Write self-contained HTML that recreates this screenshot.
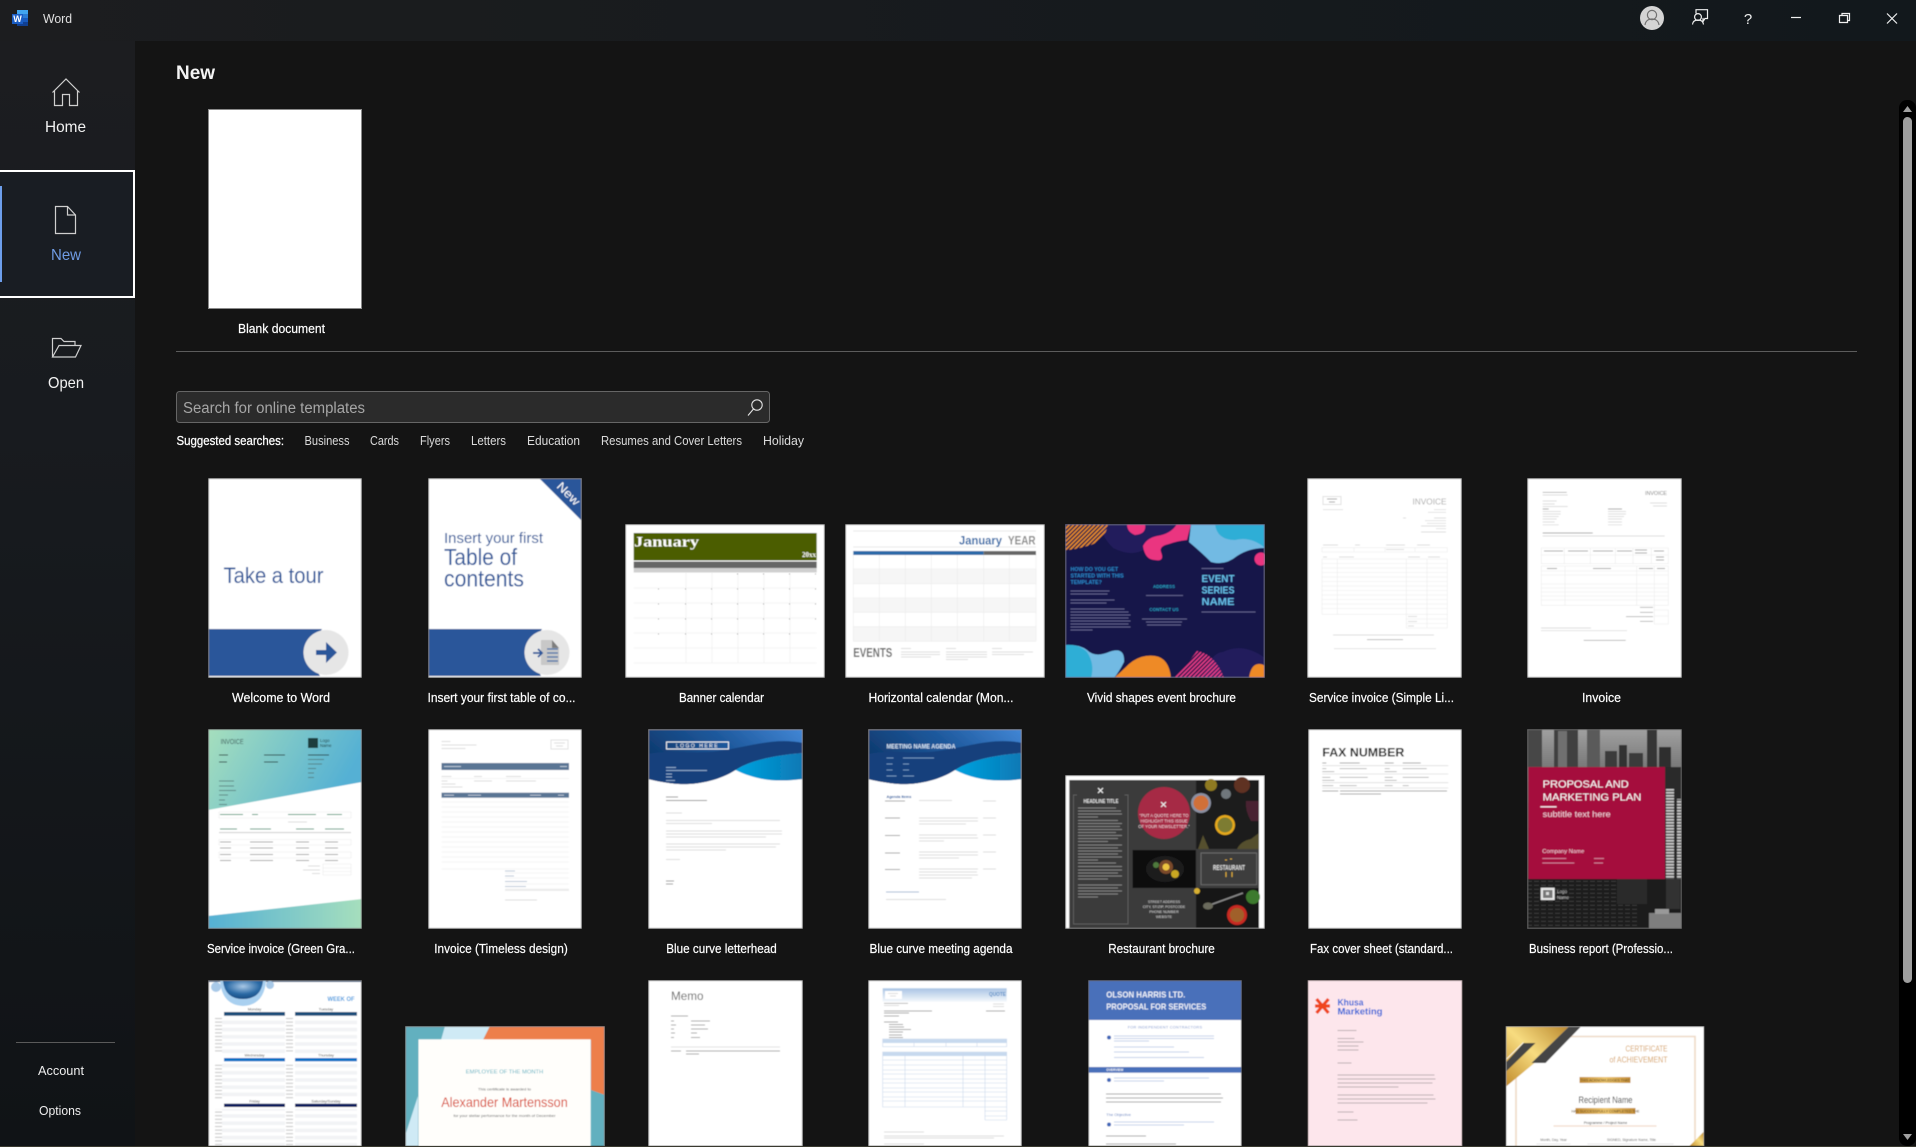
<!DOCTYPE html>
<html lang="en"><head><meta charset="utf-8"><title>Word</title>
<style>
html,body{margin:0;padding:0;width:1916px;height:1147px;overflow:hidden;background:#141414}
svg{display:block}
text{font-family:"Liberation Sans",sans-serif}
.l{fill:#fff;font-size:13px;text-anchor:middle;stroke:#fff;stroke-width:.2px}
.s{fill:#dcdcdc;font-size:13px}
.ic{fill:none;stroke:#cfcfcf;stroke-width:1.2}
.w{fill:none;stroke:#f0f0f0;stroke-width:1.2}
.gl{stroke:#d2d2d2;stroke-width:.7;fill:none}
.gd{stroke:#8c8c8c;stroke-width:.7;fill:none}
.tl{stroke:#ebebeb;stroke-width:.6;fill:none}
</style></head><body>
<svg width="1916" height="1147" viewBox="0 0 1916 1147" xmlns="http://www.w3.org/2000/svg">
<defs>
<filter id="b" x="0" y="0" width="100%" height="100%"><feGaussianBlur stdDeviation=".4"/></filter>
<linearGradient id="tb" x1="0" x2="1"><stop offset="0" stop-color="#1c1d1f"/><stop offset="1" stop-color="#12181c"/></linearGradient>
<linearGradient id="sb" x1="0" y1="0" x2="0" y2="1"><stop offset="0" stop-color="#1c1d20"/><stop offset=".35" stop-color="#181b1f"/><stop offset="1" stop-color="#101316"/></linearGradient>
<linearGradient id="gr1" x1="0" x2="1" y1="0" y2=".3"><stop offset="0" stop-color="#a6dfbd"/><stop offset="1" stop-color="#54b0d4"/></linearGradient>
<linearGradient id="gr2" x1="0" x2="1"><stop offset="0" stop-color="#54b0d4"/><stop offset="1" stop-color="#a6dfbd"/></linearGradient>
<linearGradient id="bw" x1="0" x2="1" y1=".4" y2="0"><stop offset="0" stop-color="#0f3b70"/><stop offset=".5" stop-color="#1f5a9e"/><stop offset="1" stop-color="#4287d6"/></linearGradient>
<linearGradient id="bw2" x1="0" x2="1"><stop offset="0" stop-color="#00a3e0"/><stop offset="1" stop-color="#0a78b4"/></linearGradient>
<linearGradient id="city" x1="0" y1="0" x2="0" y2="1"><stop offset="0" stop-color="#a0a0a0"/><stop offset=".2" stop-color="#777"/><stop offset=".75" stop-color="#222"/><stop offset="1" stop-color="#1e1e1e"/></linearGradient>
<linearGradient id="gold" x1="0" y1="1" x2="1" y2="0"><stop offset="0" stop-color="#c08a2a"/><stop offset=".5" stop-color="#f7dc80"/><stop offset="1" stop-color="#b9862c"/></linearGradient>
<linearGradient id="goldb" x1="0" x2="1"><stop offset="0" stop-color="#c58f38"/><stop offset=".5" stop-color="#eec770"/><stop offset="1" stop-color="#c58f38"/></linearGradient>
<linearGradient id="qb" x1="0" y1="0" x2="0" y2="1"><stop offset="0" stop-color="#a9c4e4"/><stop offset="1" stop-color="#f4f8fc"/></linearGradient>
<radialGradient id="ball" cx=".5" cy=".3" r=".7"><stop offset="0" stop-color="#a9c8e6"/><stop offset=".6" stop-color="#2b6aa5"/><stop offset="1" stop-color="#174a80"/></radialGradient>
<pattern id="hatchO" width="3" height="3" patternUnits="userSpaceOnUse" patternTransform="rotate(-45)"><rect width="3" height="1.5" fill="#ee8f28"/></pattern>
<pattern id="hatchP" width="3" height="3" patternUnits="userSpaceOnUse" patternTransform="rotate(-45)"><rect width="3" height="1.5" fill="#ea3d86"/></pattern>
<pattern id="calr" width="154" height="7.2" patternUnits="userSpaceOnUse" y="37"><rect x="14" y="3.6" width="63" height="3.6" fill="#f2f3f5"/><rect x="87" y="3.6" width="62" height="3.6" fill="#f2f3f5"/><rect x="7" y="1" width="7" height="1" fill="#c4c4c4"/><rect x="78" y="1" width="7" height="1" fill="#c4c4c4"/><rect x="7" y="4.6" width="7" height="1" fill="#c4c4c4"/><rect x="78" y="4.6" width="7" height="1" fill="#c4c4c4"/></pattern>
<pattern id="win" width="16" height="3" patternUnits="userSpaceOnUse"><rect width="16" height="1.5" fill="#c9c9c9"/><rect y="1.500" width="16" height="1.5" fill="#555"/></pattern>
<pattern id="win2" width="7" height="4" patternUnits="userSpaceOnUse"><rect width="5" height=".8" fill="#404040"/></pattern>
<g id="wave">
<path d="M87 41C100 32 125 26 154 24V50C125 54 105 50 87 41Z" fill="url(#bw2)"/>
<path d="M0 0H154V24C125 26 100 32 87 41C70 52 48 56 30 55C18 54 8 52 0 50Z" fill="url(#bw)"/>
<path d="M154 14C125 8 100 18 70 22C45 26 20 20 0 25V50C8 52 18 54 30 55C48 56 70 52 87 41C100 32 125 26 154 24Z" fill="#12417c"/>
</g>
</defs>

<!-- window -->
<rect width="1916" height="1147" fill="#141414"/>
<rect width="1916" height="41" fill="url(#tb)"/>
<rect y="41" width="135" height="1106" fill="url(#sb)"/>

<!-- title bar -->
<rect x="17" y="10" width="11" height="16" rx="1" fill="#2b7cd3"/>
<rect x="17" y="10" width="11" height="4" fill="#41a5ee"/>
<rect x="17" y="18" width="11" height="4" fill="#185abd"/>
<rect x="17" y="22" width="11" height="4" fill="#103f91"/>
<rect x="12" y="14" width="11" height="10" fill="#1a5dc4"/>
<text x="17.5" y="22" font-size="9" font-weight="700" fill="#fff" text-anchor="middle">W</text>
<text x="43" y="23" font-size="13" fill="#e0e0e0" textLength="29" lengthAdjust="spacingAndGlyphs">Word</text>

<circle cx="1652" cy="18" r="12" fill="#d4d4d4"/>
<circle cx="1652" cy="15" r="4.6" fill="none" stroke="#707070" stroke-width="1.2"/>
<path d="M1645 25c.5-4.2 3.5-6 7-6s6.500 1.800 7 6" fill="none" stroke="#707070" stroke-width="1.2"/>
<path class="w" d="M1696 13.5V9.7H1707.5V18.5H1705L1703 21.5V18.500H1702.5"/>
<circle class="w" cx="1698" cy="17" r="3.4"/>
<path class="w" d="M1692.5 24.5c.3-3.5 2.500-4.5 5.500-4.5s5.200 1 5.500 4.5"/>
<text x="1748" y="24" font-size="15" fill="#eee" text-anchor="middle">?</text>
<path d="M1791 17.5H1801" stroke="#f0f0f0" stroke-width="1.2"/>
<path class="w" d="M1839.5 15.5H1847.5V22.5H1839.5Z M1842 15.5V13.5H1849.5V20.5H1847.5"/>
<path class="w" d="M1887 13.5L1897 23.5M1897 13.5L1887 23.5"/>

<!-- sidebar -->
<path class="ic" d="M52.5 92.5L66 79L79.5 92.5M54.5 90.5V105.5H62.5V94.5H69.5V105.5H77.5V90.5"/>
<text x="65.5" y="132" font-size="16" fill="#f2f2f2" text-anchor="middle" textLength="41" lengthAdjust="spacingAndGlyphs">Home</text>
<rect x="-2" y="171" width="136" height="126" fill="#191d23" stroke="#fff" stroke-width="2"/>
<rect x="0" y="186" width="2" height="96" fill="#6d9eeb"/>
<path class="ic" d="M55.5 206.5H67.5L75.5 215V233.5H55.5ZM67.5 206.5V215H75.5"/>
<text x="66" y="260" font-size="16" fill="#6f9be4" text-anchor="middle" textLength="30" lengthAdjust="spacingAndGlyphs">New</text>
<path class="ic" d="M52.5 357V338.5H61L64 341.5H75V345.5M52.5 357L59 345.5H81L75.5 357Z"/>
<text x="66" y="388" font-size="16" fill="#f2f2f2" text-anchor="middle" textLength="36" lengthAdjust="spacingAndGlyphs">Open</text>
<path d="M16 1042.5H115" stroke="#5a5a5a"/>
<text x="61" y="1075" font-size="13" fill="#eee" text-anchor="middle" textLength="46" lengthAdjust="spacingAndGlyphs">Account</text>
<text x="60" y="1115" font-size="13" fill="#eee" text-anchor="middle" textLength="42" lengthAdjust="spacingAndGlyphs">Options</text>

<!-- main -->
<text x="176" y="79" font-size="19.5" font-weight="700" fill="#f4f4f4" textLength="39" lengthAdjust="spacingAndGlyphs">New</text>
<rect x="208.5" y="109.5" width="153" height="199" fill="#fff" stroke="#8a8a8a"/>
<text class="l" x="281.5" y="333" textLength="87" lengthAdjust="spacingAndGlyphs">Blank document</text>
<path d="M176 351.5H1857" stroke="#5c5c5c"/>

<rect x="176.5" y="391.5" width="593" height="31" rx="3" fill="#2b2b2b" stroke="#666"/>
<text x="183" y="413" font-size="15.5" fill="#a6a6a6" textLength="182" lengthAdjust="spacingAndGlyphs">Search for online templates</text>
<circle cx="757" cy="405" r="5.2" fill="none" stroke="#e2e2e2" stroke-width="1.1"/>
<path d="M753.5 409L748 415.5" stroke="#e2e2e2" stroke-width="1.1"/>

<text x="176.5" y="445" font-size="13" fill="#fff" stroke="#fff" stroke-width=".25" textLength="107.5" lengthAdjust="spacingAndGlyphs">Suggested searches:</text>
<text class="s" x="304.5" y="445" textLength="45" lengthAdjust="spacingAndGlyphs">Business</text>
<text class="s" x="370" y="445" textLength="29" lengthAdjust="spacingAndGlyphs">Cards</text>
<text class="s" x="420" y="445" textLength="30" lengthAdjust="spacingAndGlyphs">Flyers</text>
<text class="s" x="471" y="445" textLength="35" lengthAdjust="spacingAndGlyphs">Letters</text>
<text class="s" x="527" y="445" textLength="53" lengthAdjust="spacingAndGlyphs">Education</text>
<text class="s" x="601" y="445" textLength="141" lengthAdjust="spacingAndGlyphs">Resumes and Cover Letters</text>
<text class="s" x="763" y="445" textLength="41" lengthAdjust="spacingAndGlyphs">Holiday</text>

<!-- labels row 1 -->
<text class="l" x="281" y="702" textLength="98" lengthAdjust="spacingAndGlyphs">Welcome to Word</text>
<text class="l" x="501.5" y="702" textLength="148" lengthAdjust="spacingAndGlyphs">Insert your first table of co...</text>
<text class="l" x="721.5" y="702" textLength="85" lengthAdjust="spacingAndGlyphs">Banner calendar</text>
<text class="l" x="941" y="702" textLength="145" lengthAdjust="spacingAndGlyphs">Horizontal calendar (Mon...</text>
<text class="l" x="1161.5" y="702" textLength="149" lengthAdjust="spacingAndGlyphs">Vivid shapes event brochure</text>
<text class="l" x="1381.5" y="702" textLength="145" lengthAdjust="spacingAndGlyphs">Service invoice (Simple Li...</text>
<text class="l" x="1601.5" y="702" textLength="39" lengthAdjust="spacingAndGlyphs">Invoice</text>
<!-- labels row 2 -->
<text class="l" x="281" y="953" textLength="148" lengthAdjust="spacingAndGlyphs">Service invoice (Green Gra...</text>
<text class="l" x="501" y="953" textLength="133.5" lengthAdjust="spacingAndGlyphs">Invoice (Timeless design)</text>
<text class="l" x="721.5" y="953" textLength="110.5" lengthAdjust="spacingAndGlyphs">Blue curve letterhead</text>
<text class="l" x="941" y="953" textLength="143" lengthAdjust="spacingAndGlyphs">Blue curve meeting agenda</text>
<text class="l" x="1161.5" y="953" textLength="106.5" lengthAdjust="spacingAndGlyphs">Restaurant brochure</text>
<text class="l" x="1381.5" y="953" textLength="143" lengthAdjust="spacingAndGlyphs">Fax cover sheet (standard...</text>
<text class="l" x="1601" y="953" textLength="144" lengthAdjust="spacingAndGlyphs">Business report (Professio...</text>

<!-- T1 welcome -->
<svg x="208" y="478" width="154" height="200" viewBox="0 0 154 200"><g filter="url(#b)">
<rect width="154" height="200" fill="#fff"/>
<text x="15.5" y="105" font-size="22" fill="#2b579a" textLength="100" lengthAdjust="spacingAndGlyphs">Take a tour</text>
<path d="M1 151H114Q98 175 112 198H1Z" fill="#2b579a"/>
<ellipse cx="118" cy="174.5" rx="22.5" ry="22.5" fill="#e6e6e6"/>
<path d="M108 172H118V164L129 174.5L118 185V177H108Z" fill="#2b579a"/>
<rect x=".5" y=".5" width="153" height="199" fill="none" stroke="#8a8a8a"/>
</g></svg>

<!-- T2 toc -->
<svg x="428" y="478" width="154" height="200" viewBox="0 0 154 200"><g filter="url(#b)">
<rect width="154" height="200" fill="#fff"/>
<path d="M111 0H154V43Z" fill="#2b579a"/>
<text transform="translate(128,9) rotate(45)" font-size="12" fill="#fff" textLength="27" lengthAdjust="spacingAndGlyphs">New</text>
<text x="16" y="65" font-size="15" fill="#2b579a" textLength="99" lengthAdjust="spacingAndGlyphs">Insert your first</text>
<text x="16" y="87" font-size="23" fill="#2b579a" textLength="73" lengthAdjust="spacingAndGlyphs">Table of</text>
<text x="16" y="108.5" font-size="23" fill="#2b579a" textLength="80" lengthAdjust="spacingAndGlyphs">contents</text>
<path d="M1 151H114Q100 175 113 198H1Z" fill="#2b579a"/>
<ellipse cx="119" cy="174.5" rx="22.5" ry="22.5" fill="#e6e6e6"/>
<path d="M113 162H124L131 170V187H113Z" fill="#c8c8c8"/><path d="M124 162L131 170H124Z" fill="#7d7d7d"/>
<path d="M119 171h11M119 175h11M119 179h11M119 183h11" stroke="#3d6aa8" stroke-width="1.2"/>
<path d="M105 175H113M110 171L114 175L110 179" stroke="#2b579a" stroke-width="1.8" fill="none"/>
<rect x=".5" y=".5" width="153" height="199" fill="none" stroke="#8a8a8a"/>
</g></svg>

<!-- T3 banner -->
<svg x="625" y="524" width="200" height="154" viewBox="0 0 200 154"><g filter="url(#b)">
<rect width="200" height="154" fill="#fff"/>
<rect x="8.7" y="9" width="183" height="27.5" fill="#4b5d00"/>
<text x="9" y="22.5" font-weight="700" font-size="14.5" fill="#fff" style="font-family:'Liberation Serif',serif" textLength="65" lengthAdjust="spacingAndGlyphs">January</text>
<text x="191" y="33" font-weight="700" font-size="7" fill="#fff" text-anchor="end" style="font-family:'Liberation Serif',serif">20xx</text>
<rect x="8.7" y="37.5" width="183" height="6.5" fill="#666"/>
<rect x="8.7" y="44" width="183" height="4.5" fill="#cfcfcf"/>
<path class="tl" d="M8.7 64H191.7M8.7 79H191.7M8.7 94H191.7M8.7 109H191.7M8.7 124H191.7M8.7 139H191.7M61 48V139M87 48V139M113 48V139M139 48V139M165 48V139"/>
<path d="M112 50h1M138 50h1M164 50h1M190 50h1M33 65h1M60 65h1M86 65h1M112 65h1M138 65h1M164 65h1M190 65h1M33 80h1M60 80h1M86 80h1M112 80h1M138 80h1M164 80h1M190 80h1M33 95h1M60 95h1M86 95h1M112 95h1M138 95h1M164 95h1M190 95h1M33 110h1M60 110h1M86 110h1M112 110h1M138 110h1M164 110h1" stroke="#999" stroke-width="1"/>
<rect x=".5" y=".5" width="199" height="153" fill="none" stroke="#8a8a8a"/>
</g></svg>

<!-- T4 horizontal calendar -->
<svg x="845" y="524" width="200" height="154" viewBox="0 0 200 154"><g filter="url(#b)">
<rect width="200" height="154" fill="#fff"/>
<path d="M8.3 7H191M8.3 23H191" stroke="#e8e8e8"/>
<text x="114" y="20.5" font-size="12" font-weight="700" fill="#2f6aa8" textLength="43" lengthAdjust="spacingAndGlyphs">January</text>
<text x="163" y="20.5" font-size="12" font-weight="700" fill="#8a8a8a" textLength="27.5" lengthAdjust="spacingAndGlyphs">YEAR</text>
<rect x="8.3" y="27" width="130.4" height="4" fill="#2f6aa8"/><rect x="138.7" y="27" width="52.3" height="4" fill="#666"/>
<rect x="8.3" y="45" width="182.7" height="14.7" fill="#f6f6f6"/><rect x="8.3" y="74" width="182.7" height="14.3" fill="#f6f6f6"/><rect x="8.3" y="102.7" width="182.7" height="14.6" fill="#f6f6f6"/>
<path class="tl" d="M8.3 45H191M8.3 59.7H191M8.3 74H191M8.3 88.3H191M8.3 102.7H191M8.3 117.3H191M8.3 31V117.3M34.3 31V117.3M60.3 31V117.3M86.3 31V117.3M112.3 31V117.3M138.7 31V117.3M164.3 31V117.3M191 31V117.3"/>
<text x="8.3" y="133" font-size="12.5" font-weight="700" fill="#6a6a6a" textLength="39" lengthAdjust="spacingAndGlyphs">EVENTS</text>
<path class="gl" d="M56 124.5h10M56 128h39M56 130.5h39M56 133h30M101 124.5h10M101 128h41M101 130.5h41M101 133h41M101 135.5h22M147 124.5h10M147 128h41M147 130.5h32"/>
<rect x=".5" y=".5" width="199" height="153" fill="none" stroke="#8a8a8a"/>
</g></svg>

<!-- T5 vivid -->
<svg x="1065" y="524" width="200" height="154" viewBox="0 0 200 154"><g filter="url(#b)">
<rect width="200" height="154" fill="#14124a"/>
<path d="M34 0H112Q105 22 82 24Q68 34 48 24Q38 14 34 0Z" fill="#231f5c"/>
<path d="M0 0H43Q40 18 22 22Q8 26 0 26Z" fill="url(#hatchO)"/>
<path d="M62 0H80Q82 10 70 11Q62 8 62 0Z" fill="#ea3580"/>
<path d="M112 0H126L122 16Q112 17 104 20Q94 22 96 28Q100 38 90 36Q80 36 78 22Q82 14 92 12Q106 10 112 0Z" fill="#ea3580"/>
<path d="M126 0H200V24Q184 24 172 32Q160 42 146 38Q136 28 124 18Z" fill="#72bae3"/>
<path d="M150 0H200V24Q186 12 170 16Q152 16 150 0Z" fill="#2eaed6"/>
<circle cx="196" cy="35" r="6.5" fill="#ea3580"/>
<text x="5.5" y="47" font-size="5.3" font-weight="700" fill="#2a86c8">HOW DO YOU GET</text>
<text x="5.5" y="53.5" font-size="5.3" font-weight="700" fill="#2a86c8">STARTED WITH THIS</text>
<text x="5.5" y="60" font-size="5.3" font-weight="700" fill="#2a86c8">TEMPLATE?</text>
<path d="M5.5 67h39M5.5 70h37M5.5 76h44M5.5 79h36M5.5 85h54M5.5 88h58M5.5 91h60M5.5 94h58M5.5 97h60M5.5 100h58M5.5 103h60M5.5 106h22" stroke="#a8a9cc" stroke-width=".6"/>
<text x="99" y="64" font-size="4.5" font-weight="700" fill="#2a9cc0" text-anchor="middle">ADDRESS</text>
<path d="M81 71.5h37" stroke="#a8a9cc" stroke-width=".6"/>
<text x="99" y="87" font-size="4.5" font-weight="700" fill="#2a9cc0" text-anchor="middle">CONTACT US</text>
<path d="M77 95h45M81 98h36M82 101h34" stroke="#a8a9cc" stroke-width=".6"/>
<path d="M136.5 44.5h22" stroke="#a8a9cc" stroke-width=".6"/>
<text x="136.5" y="58" font-size="10" font-weight="700" fill="#66bfe9" textLength="33" lengthAdjust="spacingAndGlyphs">EVENT</text>
<text x="136.5" y="69.7" font-size="10" font-weight="700" fill="#66bfe9" textLength="33" lengthAdjust="spacingAndGlyphs">SERIES</text>
<text x="136.5" y="81" font-size="10" font-weight="700" fill="#66bfe9" textLength="33" lengthAdjust="spacingAndGlyphs">NAME</text>
<path d="M136.5 88h54" stroke="#a8a9cc" stroke-width=".6"/>
<path d="M138 154Q146 128 158 128Q178 118 200 134V154Z" fill="#231f5c"/>
<path d="M108 154Q118 146 132 127Q150 130 159 154Z" fill="url(#hatchP)"/>
<path d="M49 154Q58 146 64 140Q76 130 90 132Q104 134 106 154Z" fill="#ee8a28"/>
<path d="M0 121Q14 120 22 126Q30 134 44 128Q60 122 59 138Q54 148 49 154H0Z" fill="#72bae3"/>
<path d="M0 121Q14 120 22 128Q30 140 26 154H0Z" fill="#2eaed6"/>
<path d="M184 154Q186 140 194 140Q200 140 200 144V154Z" fill="#ee8a28"/>
<rect x=".5" y=".5" width="199" height="153" fill="none" stroke="#6a6a8a"/>
</g></svg>

<!-- T6 service invoice simple -->
<svg x="1307" y="478" width="155" height="200" viewBox="0 0 155 200"><g filter="url(#b)">
<rect width="155" height="200" fill="#fff"/>
<rect x="16" y="18.5" width="18" height="8" fill="#fff" stroke="#e2e2e2"/>
<path class="gd" d="M20 21h10M22 24h6"/>
<text x="139.5" y="26.5" font-size="7.8" fill="#aaa" text-anchor="end" textLength="34" lengthAdjust="spacingAndGlyphs">INVOICE</text>
<path class="gl" d="M16 31.7h20M127 31.7h12M121 34.3h18M96 40h3M127 40h12M118 42.7h21M120 45.3h19M114 48h25M129 50.7h10M114 54h25"/>
<path class="gl" d="M16 67h15M48 67h5M79 67h19M110 67h13M79 71.5h18M16 79h4M32 79h15M101 79h12M121 79h12M26 157h101M27 170.7h102"/>
<path class="gd" d="M60 161.7h36"/>
<path class="tl" d="M15 69.7H140.3V74H15ZM47 69.7V74M78 69.7V74M108 69.7V74M15 81H140.3M15 85.5H140.3M15 90H140.3M15 94.5H140.3M15 99H140.3M15 103.5H140.3M15 108H140.3M15 112.5H140.3M15 117H140.3M15 121.5H140.3M15 126H140.3M15 130.5H140.3M15 136.3H140.3M15 81V136.3M30.3 81V136.3M99.3 81V150M120 81V150M140.3 81V150M99 141H140.3M99 145.5H140.3M99 150H140.3"/>
<path class="gl" d="M101 138.5h9M101 143.5h9M101 148h6"/>
<rect x=".5" y=".5" width="154" height="199" fill="none" stroke="#8a8a8a"/>
</g></svg>

<!-- T7 invoice -->
<svg x="1527" y="478" width="155" height="200" viewBox="0 0 155 200"><g filter="url(#b)">
<rect width="155" height="200" fill="#fff"/>
<path class="gd" d="M15.7 14.3h24M15.7 31h6M81 31h14M15.7 55h50M56.7 162.3h42"/>
<path class="gl" d="M15.7 17h25M15.7 23h14M15.7 26h12M15.7 28.5h25M15.7 33.5h18M15.7 36h18M15.7 38.5h16M15.7 41h14M15.7 44h12M15.7 46.8h16M81 33.5h18M81 36h18M81 38.5h16M81 41h14M81 44h14M81 46.8h14M15.7 58h122M123 25h17M126 28h14M14 150h50M14 152.7h86"/>
<text x="140" y="17" font-size="5" fill="#777" text-anchor="end" textLength="22" lengthAdjust="spacingAndGlyphs">INVOICE</text>
<path class="tl" d="M14.3 70H141.3V85.7H14.3ZM14.3 77H141.3M37.3 70V85.7M63.3 70V85.7M88.3 70V85.7M106 70V85.7M124.3 70V85.7M14.3 88H141.3V127.3H14.3ZM14.3 93H141.3M14.3 97H141.3M14.3 106H141.3M14.3 110H141.3M14.3 114H141.3M14.3 118H141.3M14.3 122H141.3M38 88V127.3M109.7 88V127.3M127.3 88V146M127.3 132H141.3V146H127.3ZM127.3 138H141.3"/>
<path class="gd" d="M17 73h19M41 73h20M66 73h20M90 73h15M108 72h12M108 75h12M127 73h10M129 79h8M129 82h8M20 90.5h10M66 90.5h18M112 90.5h14M130 90.5h8M113 129.3h13M113 134.3h13M99 138.7h27M113 143.3h13"/>
<rect x=".5" y=".5" width="154" height="199" fill="none" stroke="#8a8a8a"/>
</g></svg>

<!-- R2-1 green invoice -->
<svg x="208" y="729" width="154" height="200" viewBox="0 0 154 200"><g filter="url(#b)">
<rect width="154" height="200" fill="#fff"/>
<path d="M0 0H154V53L0 81Z" fill="url(#gr1)"/>
<path d="M0 187L154 170V200H0Z" fill="url(#gr2)"/>
<text x="12.6" y="15" font-size="7" fill="#3d5a5a" textLength="23" lengthAdjust="spacingAndGlyphs">INVOICE</text>
<rect x="100" y="9" width="10" height="10" fill="#1d3c3c"/>
<text x="112" y="13" font-size="4.3" fill="#1d3c3c">Logo</text><text x="112" y="18" font-size="4.3" fill="#1d3c3c">Name</text>
<path d="M11 26h9M56 26h21M100 26h21M11 33h8M56 33h14" stroke="#2a3f3f" stroke-width=".9"/>
<path d="M100 30.5h16M100 35h14M100 39.5h8M100 44h6M100 48.5h6M11 52h15M11 57h15M11 61.5h17M11 66h9M11 71h6M11 75.5h8" stroke="#4f7072" stroke-width=".7"/>
<path d="M12 85.5h23M44 85.5h6M80 85.5h28M119 85.5h15M12 100h17M42 100h21M88 100h18M117 100h19" stroke="#4f9c7c" stroke-width=".9"/>
<path class="tl" d="M11 83H143V89H11ZM11 104H143"/>
<path d="M11 103.5H143" stroke="#c4c4c4" stroke-width=".7"/>
<path class="gd" d="M12 113h11M42 113h23M88 113h13M117 113h13M12 119h11M42 119h23M88 119h13M117 119h13M12 125.5h11M42 125.5h23M88 125.5h13M117 125.5h13M12 131.5h11M42 131.5h23M88 131.5h13M117 131.5h13"/>
<path class="tl" d="M11 110.5H143V116H11ZM11 123H143V129H11ZM115 135H143V146H115ZM115 139H143M115 142.5H143"/>
<path class="gl" d="M80 93h19M100 137h12M95 141h17M104 144.5h8"/>
<rect x=".5" y=".5" width="153" height="199" fill="none" stroke="#8a8a8a"/>
</g></svg>

<!-- R2-2 timeless -->
<svg x="428" y="729" width="154" height="200" viewBox="0 0 154 200"><g filter="url(#b)">
<rect width="154" height="200" fill="#fff"/>
<rect x="123" y="11" width="17" height="9" fill="#fff" stroke="#e2e2e2"/>
<path class="gl" d="M126 14h11M128 17h7M13.5 12.5h9M13.5 16h35M13.5 19.5h24M13.5 47.5h10M46 47.5h8M78 47.5h15M13.5 52h6M46 52h18M78 52h30M13.5 55h14M13.5 58h21"/>
<rect x="13.5" y="34" width="127.5" height="7" fill="#5a7494"/>
<rect x="13.5" y="63.7" width="127.5" height="5" fill="#5a7494"/>
<path d="M16 37.5h17M132 37.5h7M16 66.2h10M40 66.2h13M102 66.2h11M130 66.2h6" stroke="#dfe6ee" stroke-width=".7"/>
<path class="tl" d="M13.5 49.5H141M13.5 73H141M13.5 78H141M13.5 83H141M13.5 88H141M13.5 93H141M13.5 98H141M13.5 103H141M13.5 108H141M13.5 113H141M13.5 118H141M13.5 123H141M13.5 128H141M13.5 133H141M13.5 140H141M77 144H141M77 149H141M77 155H141M77 160H141"/>
<path d="M77 142h10M77 147h9M77 152.5h22M77 157.5h21" stroke="#a6b6cb" stroke-width=".7"/>
<rect x="77" y="160" width="64" height="2" fill="#ececec"/>
<path class="gl" d="M77 171h32"/>
<rect x=".5" y=".5" width="153" height="199" fill="none" stroke="#8a8a8a"/>
</g></svg>

<!-- R2-3 blue letterhead -->
<svg x="648" y="729" width="155" height="200" viewBox="0 0 155 200"><g filter="url(#b)">
<rect width="155" height="200" fill="#fff"/>
<use href="#wave" transform="scale(1.006 1)"/>
<rect x="18.5" y="13" width="62" height="7" fill="none" stroke="#fff" stroke-width=".9"/>
<text x="49.5" y="18.500" font-size="5" fill="#fff" text-anchor="middle" letter-spacing="1.5">LOGO HERE</text>
<path d="M18 38.5h10M18 41.5h41M18 45h6M18 48h6M18 51.5h9" stroke="#b6cde6" stroke-width=".7"/>
<path d="M18 68h12M18 71.5h41M18 152h8M18 155h7" stroke="#777" stroke-width=".8"/>
<path class="gl" d="M18 84h16M18 91.5h114M18 94.5h46M18 102h116M18 105h116M18 108h100M18 115h114M18 118h110M18 121h60M18 130.5h14"/>
<rect x=".5" y=".5" width="154" height="199" fill="none" stroke="#8a8a8a"/>
</g></svg>

<!-- R2-4 agenda -->
<svg x="868" y="729" width="154" height="200" viewBox="0 0 154 200"><g filter="url(#b)">
<rect width="154" height="200" fill="#fff"/>
<use href="#wave"/>
<text x="18.5" y="19.5" font-size="6" font-weight="700" fill="#dbe8f6" textLength="69" lengthAdjust="spacingAndGlyphs">MEETING NAME AGENDA</text>
<path d="M18.5 29h7M35 29h31M18.5 35h6M35 35h6M18.5 41h6M35 41h6M18.5 47h10M35 47h11" stroke="#8fb0d4" stroke-width=".7"/>
<text x="18.5" y="69" font-size="3.8" font-weight="700" fill="#2b5a9e">Agenda Items</text>
<path class="gd" d="M17 72h20M17 89h15M17 106.5h15M17 124h15M17 140.5h15"/>
<path class="gl" d="M51 71.5h33M115 72h13M51 89h59M51 92h59M51 95h47M115 89h13M51 106h58M51 109h59M51 112h25M115 106h13M51 123h59M51 126h59M51 129h40M115 123h13M51 140h59M51 143h58M51 146h59M51 149h53M115 140h13M18 170.5h60"/>
<path d="M18 163h33" stroke="#8aa5c9" stroke-width=".8"/>
<rect x=".5" y=".5" width="153" height="199" fill="none" stroke="#8a8a8a"/>
</g></svg>

<!-- R2-5 restaurant -->
<svg x="1065" y="775" width="200" height="154" viewBox="0 0 200 154"><g filter="url(#b)">
<rect width="200" height="154" fill="#fff"/>
<rect x="4.3" y="5" width="189.7" height="149" fill="#3a3a3b"/>
<path d="M12 20H8.5V149H63V20H59.5" fill="none" stroke="#5e5e5e"/>
<text x="36" y="28" font-size="5.5" font-weight="700" fill="#e8e8e8" text-anchor="middle" textLength="35" lengthAdjust="spacingAndGlyphs">HEADLINE TITLE</text>
<path d="M33 13l5 5M38 13l-5 5" stroke="#eee" stroke-width="1.2"/>
<path d="M13 33h38M13 36h43M13 39h44M13 42h20M13 45.5h40M13 48.5h44M13 51.5h42M13 54.5h44M13 57.5h38M13 60.5h44M13 63.5h40M13 66.5h30M13 70h44M13 73h40M13 76h44M13 79h40M13 82h44M13 85h20M13 88h38M13 91.5h44M13 95h44M13 98h40M13 101h44M13 104h30M13 110h44M13 113h40M13 116h44M13 119h40M13 122h20" stroke="#9a9a9a" stroke-width=".7"/>
<circle cx="99" cy="38" r="26" fill="#a62b45"/>
<path d="M96 27l5 5M101 27l-5 5" stroke="#eee" stroke-width="1.2"/>
<text x="99" y="42" font-size="4.2" fill="#f2dbe0" text-anchor="middle">"PUT A QUOTE HERE TO</text>
<text x="99" y="47.5" font-size="4.2" fill="#f2dbe0" text-anchor="middle">HIGHLIGHT THIS ISSUE</text>
<text x="99" y="53" font-size="4.2" fill="#f2dbe0" text-anchor="middle">OF YOUR NEWSLETTER."</text>
<rect x="131" y="5" width="63" height="69" fill="#1a1a1a"/>
<circle cx="136" cy="28" r="10" fill="#8a8fa0"/><circle cx="136" cy="28" r="7.500" fill="#d07038"/>
<circle cx="146" cy="10" r="6" fill="#8f7a20"/>
<circle cx="177" cy="10" r="8" fill="#5e3024"/><circle cx="161" cy="19" r="5" fill="#6f777c"/>
<circle cx="160" cy="50" r="10" fill="#e5a91a"/><circle cx="160" cy="50" r="7.500" fill="#7d7c30"/>
<path d="M181 26H194V46H186Q180 36 181 26Z" fill="#4a2430"/>
<path d="M133 74l5-14l6 14zM172 74q4-8 14-10l8-6v16z" fill="#55502f"/>
<rect x="67.7" y="75" width="63.3" height="38" fill="#0e0e0e"/>
<ellipse cx="100" cy="94" rx="19" ry="13" fill="#1b1b1d"/>
<circle cx="101" cy="92" r="7" fill="#7a4a2a"/><circle cx="101" cy="92" r="3.5" fill="#ecc240"/>
<circle cx="110" cy="99" r="4" fill="#c9a722"/><circle cx="91" cy="90" r="3" fill="#4f7a3c"/>
<rect x="131" y="74" width="63" height="39" fill="#3c3c3c"/>
<rect x="136" y="78" width="55.7" height="31.7" fill="none" stroke="#6a6a6a"/>
<text x="164" y="95" font-size="7" font-weight="700" fill="#e0e0e0" text-anchor="middle" textLength="32" lengthAdjust="spacingAndGlyphs">RESTAURANT</text>
<path d="M161 97v5M167 97v5" stroke="#d9a93a" stroke-width="1.2"/>
<path d="M160 85h2M165 84h2" stroke="#d9a93a"/>
<text x="99" y="128" font-size="3.6" fill="#ddd" text-anchor="middle">STREET ADDRESS</text>
<text x="99" y="133" font-size="3.6" fill="#ddd" text-anchor="middle">CITY, ST/ZIP, POSTCODE</text>
<text x="99" y="138" font-size="3.6" fill="#ddd" text-anchor="middle">PHONE NUMBER</text>
<text x="99" y="143" font-size="3.6" fill="#ddd" text-anchor="middle">WEBSITE</text>
<rect x="131" y="113" width="63" height="41" fill="#141414"/>
<circle cx="172" cy="140" r="10" fill="#c82a22"/><circle cx="172" cy="140" r="7" fill="#a0602c"/>
<circle cx="188" cy="122" r="7" fill="#3d7a2d"/>
<path d="M145 130L178 118" stroke="#8a8a8a" stroke-width="1.5"/><ellipse cx="143" cy="131" rx="5" ry="3.5" fill="#6a6a5c"/>
<circle cx="132" cy="116" r="3" fill="#d8b030"/>
<rect x=".5" y=".5" width="199" height="153" fill="none" stroke="#8a8a8a"/>
</g></svg>

<!-- R2-6 fax -->
<svg x="1308" y="729" width="154" height="200" viewBox="0 0 154 200"><g filter="url(#b)">
<rect width="154" height="200" fill="#fff"/>
<text x="14.3" y="27.3" font-size="11.5" font-weight="700" fill="#222" textLength="82" lengthAdjust="spacingAndGlyphs">FAX NUMBER</text>
<path d="M14.3 36.7H140.3M14.3 45H140.3M14.3 53.7H140.3M14.3 59H140.3" stroke="#d0d0d0" stroke-width=".6"/>
<path class="gd" d="M14.3 34h4M31.7 34h20M76.7 34h9M94.700 34h18M14.3 39.7h4M14.3 42.7h12M31.7 39.7h27M76.7 39.7h5M76.7 42.7h12M94.7 39.7h24M14.3 48.3h8M14.3 51.3h12M31.7 48.3h28M76.7 48.3h8M76.7 51.3h12M94.7 48.3h26M14.3 56.7h11M31.7 56.7h17M76.7 56.7h8M94.7 56.7h6M14.3 62h16M32 62h107M32 65h41"/>
<rect x=".5" y=".5" width="153" height="199" fill="none" stroke="#8a8a8a"/>
</g></svg>

<!-- R2-7 business -->
<svg x="1527" y="729" width="155" height="200" viewBox="0 0 155 200"><g filter="url(#b)">
<rect width="155" height="200" fill="url(#city)"/>
<rect x="1" y="0" width="14" height="38" fill="#474747"/>
<rect x="27" y="0" width="24" height="38" fill="#404040"/>
<rect x="31" y="2" width="9" height="36" fill="#707070"/>
<rect x="60" y="0" width="13" height="38" fill="#5a5a5a"/>
<rect x="78" y="22" width="12" height="16" fill="#3a3a3a"/><rect x="92" y="16" width="8" height="22" fill="#303030"/>
<rect x="102" y="24" width="14" height="14" fill="#3a3a3a"/>
<rect x="120" y="0" width="10" height="38" fill="#343434"/>
<rect x="132" y="18" width="12" height="20" fill="#2f2f2f"/>
<rect x="1" y="150" width="153" height="50" fill="#1c1c1c"/>
<rect x="1" y="150" width="111" height="50" fill="url(#win2)"/>
<rect x="90" y="150" width="30" height="25" fill="#2a2a2a"/>
<rect x="138" y="38" width="17" height="112" fill="#2a2a2a"/>
<rect x="139" y="60" width="8" height="90" fill="url(#win)"/>
<rect x="150" y="70" width="4" height="80" fill="url(#win)"/>
<rect x="139" y="150" width="14" height="30" fill="#333"/>
<rect x="122" y="184" width="32" height="15" fill="#7e7e7e"/><rect x="128" y="180" width="14" height="5" fill="#999"/>
<rect x="1.3" y="38" width="136.7" height="112" fill="#a50a3e"/>
<text x="15.7" y="58.3" font-size="10.5" fill="#fff" textLength="86" lengthAdjust="spacingAndGlyphs">PROPOSAL AND</text>
<text x="15.7" y="71.7" font-size="10.5" fill="#fff" textLength="98.7" lengthAdjust="spacingAndGlyphs">MARKETING PLAN</text>
<rect x="13.3" y="77.2" width="16.3" height="1.2" fill="#fff"/>
<text x="15.7" y="88" font-size="8.5" fill="#f5d5e0" textLength="68" lengthAdjust="spacingAndGlyphs">subtitle text here</text>
<text x="15.3" y="124" font-size="5.3" fill="#f5d5e0" textLength="42" lengthAdjust="spacingAndGlyphs">Company Name</text>
<path d="M15.3 129.5h24M15.3 134h32M67 129.5h10M67 134h9" stroke="#e0a5b9" stroke-width=".7"/>
<rect x="13.7" y="158.7" width="14" height="12.3" fill="#e8e8e8"/>
<rect x="16" y="161" width="9.5" height="8" fill="#777"/><rect x="19" y="163" width="3" height="3" fill="#ddd"/>
<text x="30" y="164" font-size="4.5" fill="#ccc">Logo</text><text x="30" y="170" font-size="4.5" fill="#ccc">Name</text>
<rect x=".5" y=".5" width="154" height="199" fill="none" stroke="#6a6a6a"/>
</g></svg>

<!-- R3-1 week -->
<svg x="208" y="980" width="154" height="166" viewBox="0 0 154 166"><g filter="url(#b)">
<rect width="154" height="166" fill="#fff"/>
<rect width="154" height="2" fill="#3f5f85"/>
<circle cx="8" cy="7" r="5" fill="#a8c9e8"/><circle cx="62" cy="5" r="4" fill="#a8c9e8"/>
<path d="M12 1H58Q56 25 35 26Q14 25 12 1Z" fill="#a9d0f0"/>
<path d="M15 1H55Q53 19 35 19Q17 19 15 1Z" fill="url(#ball)"/>
<text x="146.5" y="21" font-size="6.5" font-weight="700" fill="#4a9ee0" text-anchor="end" textLength="27" lengthAdjust="spacingAndGlyphs">WEEK OF</text>
<text x="46.5" y="30.5" font-size="3.8" fill="#555" text-anchor="middle">Monday</text>
<text x="118" y="30.5" font-size="3.8" fill="#555" text-anchor="middle">Tuesday</text>
<text x="46.5" y="76.5" font-size="3.8" fill="#555" text-anchor="middle">Wednesday</text>
<text x="118" y="76.5" font-size="3.8" fill="#555" text-anchor="middle">Thursday</text>
<text x="46.5" y="122.5" font-size="3.8" fill="#555" text-anchor="middle">Friday</text>
<text x="118" y="122.5" font-size="3.8" fill="#555" text-anchor="middle">Saturday/Sunday</text>
<rect x="16" y="32" width="61" height="3.7" fill="#1f4e79"/><rect x="87" y="32" width="62" height="3.7" fill="#1f4e79"/>
<rect x="16" y="78" width="61" height="3.3" fill="#0a70c4"/><rect x="87" y="78" width="62" height="3.3" fill="#0a70c4"/>
<rect x="16" y="123.7" width="61" height="3.3" fill="#0a1f5c"/><rect x="87" y="123.7" width="62" height="3.3" fill="#0a1f5c"/>
<rect x="0" y="37" width="154" height="36" fill="url(#calr)"/>
<rect x="0" y="83" width="154" height="36" fill="url(#calr)"/>
<rect x="0" y="129" width="154" height="37" fill="url(#calr)"/>
<rect x=".5" y=".5" width="153" height="170" fill="none" stroke="#777"/>
</g></svg>

<!-- R3-2 employee -->
<svg x="405" y="1026" width="200" height="120" viewBox="0 0 200 120"><g filter="url(#b)">
<rect width="200" height="120" fill="#62b0bf"/>
<path d="M40 0H85L78 14H36Z" fill="#cfeaf5"/>
<path d="M85 0H200V69L186 64V14H78Z" fill="#ed7f4b"/>
<path d="M0 120V110L13 70V120Z" fill="#cfeaf5"/>
<rect x="13.5" y="13.3" width="172.2" height="107" fill="#fffefb"/>
<text x="99.5" y="47.3" font-size="5.6" fill="#5fb3c3" text-anchor="middle" textLength="77.5" lengthAdjust="spacingAndGlyphs">EMPLOYEE OF THE MONTH</text>
<text x="99.5" y="64.5" font-size="3.8" fill="#666" text-anchor="middle" textLength="53" lengthAdjust="spacingAndGlyphs">This certificate is awarded to</text>
<text x="99.5" y="81" font-size="14" fill="#d8422a" text-anchor="middle" textLength="126.5" lengthAdjust="spacingAndGlyphs">Alexander Martensson</text>
<text x="99.5" y="91" font-size="3.8" fill="#666" text-anchor="middle" textLength="102" lengthAdjust="spacingAndGlyphs">for your stellar performance for the month of December</text>
<rect x=".5" y=".5" width="199" height="125" fill="none" stroke="#888"/>
</g></svg>

<!-- R3-3 memo -->
<svg x="648" y="980" width="155" height="166" viewBox="0 0 155 166"><g filter="url(#b)">
<rect width="155" height="166" fill="#fff"/>
<text x="23" y="20" font-size="12" fill="#666" textLength="32.5" lengthAdjust="spacingAndGlyphs">Memo</text>
<path class="gd" d="M23 36h17M23 41h3M43 41h19M23 45h5M43 45h14M23 49h3M43 49h17M23 53h4M43 53h6M23 57.5h3M43 57.5h9M23 71h10M38 71h94M38 74h13"/>
<path d="M23 67H132" stroke="#e2e2e2"/>
<rect x=".5" y=".5" width="154" height="170" fill="none" stroke="#8a8a8a"/>
</g></svg>

<!-- R3-4 quote -->
<svg x="868" y="980" width="154" height="166" viewBox="0 0 154 166"><g filter="url(#b)">
<rect width="154" height="166" fill="#fff"/>
<rect x="14.7" y="8.3" width="124" height="13.4" fill="url(#qb)"/>
<rect x="17" y="11" width="17" height="8" fill="#fff"/>
<path class="gl" d="M20 13.5h10M22 16h6"/>
<text x="138" y="16" font-size="5" font-weight="700" fill="#5b8ec6" text-anchor="end" textLength="17" lengthAdjust="spacingAndGlyphs">QUOTE</text>
<path class="gd" d="M16 23.3h24M16 31h48M16 33h25M16 36h15M16 42h14M21 44.5h14M21 47h15M21 49.500h22M21 52h14M21 55h13M21 57.5h14M118 31h19"/>
<path class="gl" d="M16 25.5h15M125 24h11M125 26.5h11M16 152h40M16 156h120M16 158h110M16 164h40"/>
<rect x="14.7" y="59" width="124" height="4" fill="#c7d9ee"/>
<rect x="14.7" y="72" width="124" height="4" fill="#c7d9ee"/>
<path d="M14.7 59H138.7V66.7H14.7ZM46 59V66.7M78 59V66.7M109 59V66.7M14.7 72H138.7V127H14.7ZM37 72V127M95 72V127M117 72V140M14.7 80H138.7M14.7 85H138.7M14.7 90H138.7M14.7 94H138.7M14.7 99H138.7M14.7 103H138.7M14.7 108H138.7M14.7 112H138.7M14.7 117H138.7M14.7 121H138.7M117 131H138.7M117 136H138.7M117 140H138.7M138.7 127V140" fill="none" stroke="#c9d8ec" stroke-width=".6"/>
<rect x=".5" y=".5" width="153" height="170" fill="none" stroke="#8a8a8a"/>
</g></svg>

<!-- R3-5 olson -->
<svg x="1088" y="980" width="154" height="166" viewBox="0 0 154 166"><g filter="url(#b)">
<rect width="154" height="166" fill="#fff"/>
<rect width="154" height="40" fill="#4a6fba"/>
<text x="18.3" y="17.3" font-size="8.5" font-weight="700" fill="#eef2fa" textLength="79" lengthAdjust="spacingAndGlyphs">OLSON HARRIS LTD.</text>
<text x="18.3" y="29.7" font-size="8.5" font-weight="700" fill="#eef2fa" textLength="100" lengthAdjust="spacingAndGlyphs">PROPOSAL FOR SERVICES</text>
<text x="77" y="48.5" font-size="3.8" fill="#8199cf" text-anchor="middle" letter-spacing=".3">FOR INDEPENDENT CONTRACTORS</text>
<circle cx="21" cy="57.5" r="2" fill="#3f67b8"/><circle cx="21" cy="100" r="2" fill="#3f67b8"/><circle cx="21" cy="144.5" r="2" fill="#3f67b8"/>
<path d="M26 56h100M26 58.5h100M26 61h35M26 67h60M26 72h75M26 77.5h90M26 98h95M26 101h50M26 142h100M26 145h70" stroke="#b4c3e4" stroke-width=".7"/>
<rect y="87" width="154" height="5.7" fill="#4a6fba"/>
<text x="18.3" y="91" font-size="3.2" font-weight="700" fill="#fff">OVERVIEW</text>
<path class="gd" d="M18 114h115M18 118h117M18 122h115M18 156h40M18 164h70"/>
<text x="18.3" y="136" font-size="4" fill="#6a86c3">The Objective</text>
<rect x=".5" y=".5" width="153" height="170" fill="none" stroke="#666"/>
</g></svg>

<!-- R3-6 khusa -->
<svg x="1307.5" y="980" width="155" height="166" viewBox="0 0 155 166"><g filter="url(#b)">
<rect width="155" height="166" fill="#fde6ec"/>
<path d="M15 26L9 19M15 26L21 19M15 26L9 33M15 26L21 33M15 26H7.5M15 26H22.5" stroke="#f0451f" stroke-width="3.2"/>
<text x="30" y="25.5" font-size="9" font-weight="700" fill="#2f62d8" textLength="26" lengthAdjust="spacingAndGlyphs">Khusa</text>
<text x="30" y="34.7" font-size="9" font-weight="700" fill="#2f62d8" textLength="45" lengthAdjust="spacingAndGlyphs">Marketing</text>
<path d="M30 50.5h19M30 58.5h17M30 62h26M30 66h21M30 70h21M30 83h14M30 95h97M30 99h98M30 103h95M30 107h61M30 115h96M30 119h98M30 123h90M30 132h16M30 140h20" stroke="#a89ca0" stroke-width=".7"/>
<rect x=".5" y=".5" width="154" height="170" fill="none" stroke="#a99"/>
</g></svg>

<!-- R3-7 certificate -->
<svg x="1505.5" y="1026" width="199" height="120" viewBox="0 0 199 120"><g filter="url(#b)">
<rect width="199" height="120" fill="#fff"/>
<path d="M10.5 120V10.5H189.5V120" fill="none" stroke="#eed9c5" stroke-width="1.6"/>
<path d="M0 0H64L26 37H29L0 61Z" fill="url(#gold)"/>
<path d="M64 0H76L40 37H26Z" fill="#444"/>
<path d="M18 17H30L0 46V37Z" fill="#444"/>
<path d="M18 16.500L0 34" stroke="#fff" stroke-width=".8"/>
<path d="M199 105V120H184Z" fill="url(#gold)"/>
<text x="162" y="25.7" font-size="8.5" fill="#d7a25f" text-anchor="end" textLength="42" lengthAdjust="spacingAndGlyphs">CERTIFICATE</text>
<text x="162" y="36.7" font-size="8.5" fill="#d7a25f" text-anchor="end" textLength="58" lengthAdjust="spacingAndGlyphs">of ACHIEVEMENT</text>
<rect x="74" y="51" width="51" height="6" fill="url(#goldb)"/>
<text x="99.5" y="55.5" font-size="3.6" fill="#5a4520" text-anchor="middle">THIS ACKNOWLEDGES THAT</text>
<text x="100" y="77" font-size="9" fill="#333" text-anchor="middle" textLength="54" lengthAdjust="spacingAndGlyphs">Recipient Name</text>
<rect x="70" y="82" width="60" height="6" fill="url(#goldb)"/>
<text x="100" y="86.5" font-size="3.6" fill="#5a4520" text-anchor="middle">HAS SUCCESSFULLY COMPLETED THE</text>
<text x="100" y="98" font-size="3.6" fill="#444" text-anchor="middle">Programme / Project Name</text>
<path d="M48 100H151" stroke="#f1dccb" stroke-width="1.2"/>
<text x="48" y="115" font-size="3.5" fill="#666" text-anchor="middle">Month, Day, Year</text>
<text x="126" y="115" font-size="3.5" fill="#666" text-anchor="middle">SIGNED, Signature Name, Title</text>
<path d="M31 118H65M82 118H168" stroke="#ddd" stroke-width=".8"/>
<rect x=".5" y=".5" width="198" height="125" fill="none" stroke="#999"/>
</g></svg>

<!-- scrollbar -->
<rect x="1899" y="100" width="17" height="1046" rx="8" fill="#000"/>
<path d="M1903 112L1907.5 106L1912 112Z" fill="#a0a0a0"/>
<rect x="1903" y="117" width="9" height="866" rx="4.5" fill="#9e9e9e"/>
<path d="M1903 1134H1912L1907.5 1140Z" fill="#a0a0a0"/>

<!-- bottom edge -->
<rect x="0" y="1146" width="1916" height="1" fill="#3a3a30"/>
</svg>
</body></html>
